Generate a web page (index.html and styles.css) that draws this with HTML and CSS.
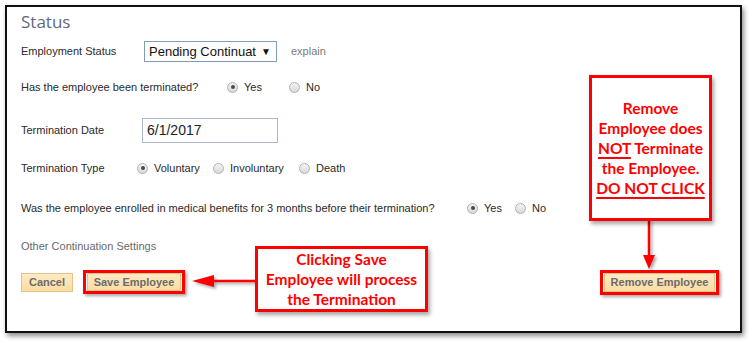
FILE: index.html
```html
<!DOCTYPE html>
<html>

<head>
	<meta charset="UTF-8">
	<link rel="stylesheet" href="styles.css">
</head>

<body>
	<!-- 员工状态面板 -->
	<div class="panel">
		<div class="panel-title">Status</div>

		<div class="row row-status">
			<div class="label">Employment Status</div>
			<div class="select">Pending Continuat<span class="select-arrow">▼</span></div>
			<div class="explain">explain</div>
		</div>

		<div class="row row-terminated">
			<div class="label label-wide">Has the employee been terminated?</div>
			<div class="opt opt-yes"><span class="radio on"></span>Yes</div>
			<div class="opt"><span class="radio"></span>No</div>
		</div>

		<div class="row row-date">
			<div class="label">Termination Date</div>
			<div class="date-input">6/1/2017</div>
		</div>

		<div class="row row-type">
			<div class="label">Termination Type</div>
			<div class="opt opt-vol"><span class="radio on"></span>Voluntary</div>
			<div class="opt opt-invol"><span class="radio"></span>Involuntary</div>
			<div class="opt"><span class="radio"></span>Death</div>
		</div>

		<div class="row row-medical">
			<div class="label label-long">Was the employee enrolled in medical benefits for 3 months before their termination?</div>
			<div class="opt opt-yes2"><span class="radio on"></span>Yes</div>
			<div class="opt"><span class="radio"></span>No</div>
		</div>

		<div class="row row-other">
			<div class="other">Other Continuation Settings</div>
		</div>

		<div class="row row-actions">
			<button class="btn btn-cancel">Cancel</button>
			<span class="mark mark-save"><button class="btn btn-save">Save Employee</button></span>
			<span class="mark mark-remove"><button class="btn btn-remove">Remove Employee</button></span>
		</div>
	</div>

	<!-- 标注 -->
	<div class="notes">
		<svg class="arrows" width="752" height="343" viewBox="0 0 752 343">
			<line x1="255" y1="281" x2="211" y2="281" stroke="#f00" stroke-width="2.5" />
			<polygon points="192,281 214,275 214,287" fill="#f00" />
			<line x1="649" y1="220" x2="649" y2="257" stroke="#f00" stroke-width="2.5" />
			<polygon points="649,269 643,255 655,255" fill="#f00" />
		</svg>
		<div class="callout callout-save">Clicking Save<br>Employee will process<br>the Termination</div>
		<div class="callout callout-remove">Remove<br>Employee does<br><u>NOT</u> Terminate<br>the Employee.<br><u>DO NOT CLICK</u></div>
	</div>
</body>

</html>
```

FILE: styles.css
```css
		html,
		body {
			margin: 0;
			padding: 0;
			background: #fff;
		}

		body {
			position: relative;
			width: 752px;
			height: 343px;
			overflow: hidden;
			font-family: "Liberation Sans", Arial, sans-serif;
		}

		/* 外框 */
		.panel {
			margin: 5px 0 0 5px;
			width: 737px;
			height: 328px;
			box-sizing: border-box;
			border: 2px solid #111;
			box-shadow: 2px 3px 5px rgba(0, 0, 0, 0.45);
			padding: 3px 21px 0 14px;
		}

		.panel-title {
			height: 24px;
			line-height: 24px;
			font-family: "Open Sans", sans-serif;
			font-size: 17px;
			color: #5e6a7c;
		}

		.row {
			display: flex;
			align-items: center;
			font-size: 11px;
			color: #2a2a2a;
		}

		.row-status { height: 34px; }
		.row-terminated { height: 38px; }
		.row-date { height: 48px; }
		.row-type { height: 28px; }
		.row-medical { height: 52px; }
		.row-other { height: 24px; }
		.row-actions { height: 48px; }

		.label {
			width: 116px;
			flex-shrink: 0;
		}

		.label-wide {
			width: 206px;
		}

		.label-long {
			width: 446px;
		}

		/* 下拉框 */
		.select {
			margin-left: 7px;
			width: 133px;
			height: 21px;
			box-sizing: border-box;
			border: 1px solid #7f9db9;
			padding-left: 4px;
			display: flex;
			align-items: center;
			font-size: 13px;
			color: #111;
			white-space: nowrap;
		}

		.select-arrow {
			font-size: 10px;
			margin-left: 5px;
		}

		.explain {
			margin-left: 14px;
			color: #7a7a7a;
		}

		.date-input {
			margin-left: 5px;
			width: 136px;
			height: 25px;
			box-sizing: border-box;
			border: 1px solid #a9b8cc;
			padding-left: 4px;
			display: flex;
			align-items: center;
			font-size: 14px;
			color: #222;
		}

		/* 单选框 */
		.opt {
			display: flex;
			align-items: center;
			flex-shrink: 0;
		}

		.opt-yes { width: 62px; }
		.opt-vol { width: 76px; }
		.opt-invol { width: 86px; }
		.opt-yes2 { width: 48px; }

		.radio {
			width: 11px;
			height: 11px;
			box-sizing: border-box;
			border-radius: 50%;
			border: 1px solid #b0b0b0;
			background: linear-gradient(#f4f4f4, #d9d9d9);
			margin-right: 6px;
			display: inline-flex;
			align-items: center;
			justify-content: center;
		}

		.radio.on::after {
			content: "";
			width: 4px;
			height: 4px;
			border-radius: 50%;
			background: #4a4a4a;
		}

		.other {
			color: #6a6a6a;
		}

		/* 按钮 */
		.btn {
			margin: 0;
			padding: 0;
			height: 19px;
			box-sizing: border-box;
			border: 1px solid #e4c486;
			background: linear-gradient(#feebc4, #fbdba2);
			font-family: "Liberation Sans", Arial, sans-serif;
			font-size: 11px;
			font-weight: bold;
			color: #6b6b6b;
			cursor: pointer;
		}

		.btn-cancel { width: 52px; }
		.btn-save { width: 94px; height: 18px; }
		.btn-remove { width: 111px; }

		.mark {
			display: inline-flex;
			border: 3px solid #f00;
			padding: 0 1px;
			box-shadow: 2px 2px 3px rgba(0, 0, 0, 0.35);
		}

		.mark-save {
			margin-left: 10px;
		}

		.mark-remove {
			margin-left: auto;
		}

		/* 标注层 */
		.notes {
			position: absolute;
			left: 0;
			top: 0;
			width: 752px;
			height: 343px;
			pointer-events: none;
		}

		.arrows {
			position: absolute;
			left: 0;
			top: 0;
			filter: drop-shadow(2px 2px 1.5px rgba(0, 0, 0, 0.35));
		}

		.callout {
			position: absolute;
			box-sizing: border-box;
			border: 3px solid #f00;
			background: #fff;
			box-shadow: 2px 3px 4px rgba(0, 0, 0, 0.35);
			text-align: center;
			font-family: Lato, sans-serif;
			font-weight: bold;
			font-size: 15.5px;
			line-height: 20px;
			color: #f00;
		}

		.callout u {
			text-decoration-thickness: 2px;
			text-underline-offset: 3px;
		}

		.callout-save {
			left: 255px;
			top: 246px;
			width: 173px;
			height: 66px;
		}

		.callout-remove {
			left: 589px;
			top: 75px;
			width: 123px;
			height: 146px;
			padding-top: 20px;
		}
```
